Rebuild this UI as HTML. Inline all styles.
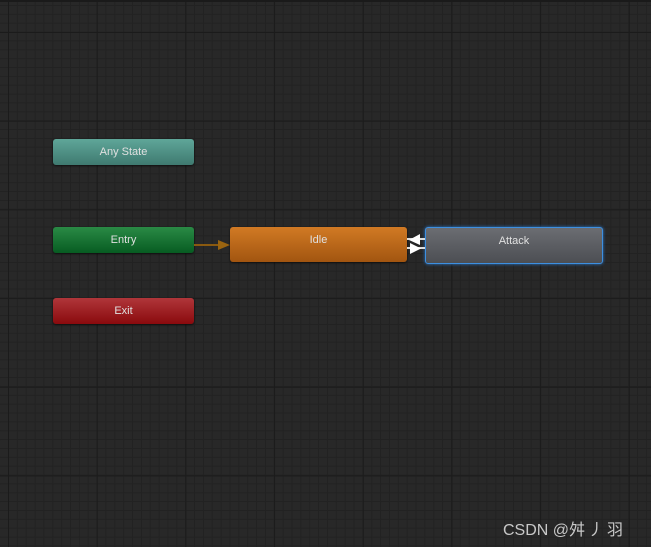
<!DOCTYPE html><html><head><style>
body{margin:0;width:651px;height:547px;overflow:hidden;background:#282828;font-family:"Liberation Sans",sans-serif;position:relative}
.g{position:absolute;left:0;top:0;width:651px;height:547px;
background-image:
linear-gradient(to right,#1b1b1b 1px,transparent 1px),
linear-gradient(to bottom,#1b1b1b 1px,transparent 1px),
linear-gradient(to right,#222 1px,transparent 1px),
linear-gradient(to bottom,#222 1px,transparent 1px);
background-size:88.7px 88.7px,88.7px 88.7px,8.87px 8.87px,8.87px 8.87px;
background-position:8px 32px,8px 32px,8px 5px,8px 5px}
.top{position:absolute;left:0;top:0;width:651px;height:2px;background:#1a1a1a}
.n{position:absolute;border-radius:3px;color:#e0e0e0;font-size:11px;text-align:center;box-shadow:0 1px 2px rgba(0,0,0,.6)}
</style></head><body>
<div class="g"></div><div class="top"></div>
<div class="n" style="left:53px;top:139px;width:141px;height:26px;line-height:27px;background:linear-gradient(#5fa699,#3f7a70)">Any State</div>
<div class="n" style="left:53px;top:227px;width:141px;height:26px;line-height:27px;background:linear-gradient(#2a8a45,#075c22)">Entry</div>
<div class="n" style="left:53px;top:298px;width:141px;height:26px;line-height:27px;background:linear-gradient(#b0363a,#8a0a0d)">Exit</div>
<div class="n" style="left:230px;top:227px;width:177px;height:35px;line-height:27px;background:linear-gradient(#d17a24,#a25510)">Idle</div>
<div class="n" style="left:425px;top:227px;width:176px;height:35px;line-height:26px;background:linear-gradient(#6b6d72,#4c4e53);border:1px solid #3d8fe0;box-shadow:0 0 3px #2a7ad0">Attack</div>
<svg style="position:absolute;left:0;top:0" width="651" height="547">
<line x1="194" y1="245" x2="220" y2="245" stroke="#8a5a10" stroke-width="2"/>
<polygon points="218,240 230,245 218,250" fill="#9a6410"/>
<line x1="407" y1="239" x2="425" y2="239" stroke="#ddd" stroke-width="2"/>
<polygon points="420,234 409,240 420,245" fill="#fff"/>
<line x1="407" y1="248" x2="425" y2="248" stroke="#ddd" stroke-width="2"/>
<polygon points="410,243 421,248.5 410,254" fill="#fff"/>
</svg>
<div style="position:absolute;left:503px;top:516px;color:#c8c8c8;font-size:16px;font-family:'Liberation Sans','Noto Sans CJK SC',sans-serif">CSDN @<span style="letter-spacing:3px">舛丿羽</span></div>
</body></html>
